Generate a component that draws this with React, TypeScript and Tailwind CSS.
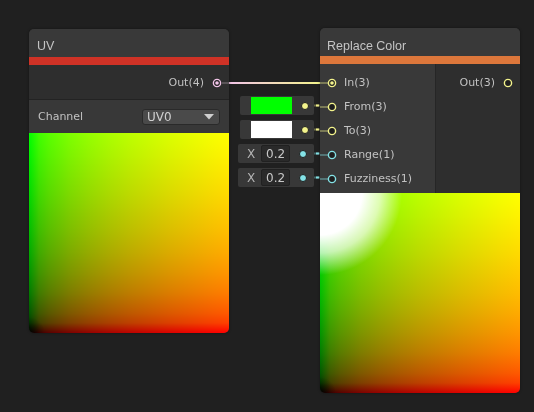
import React from "react";

const body = "font-['DejaVu_Sans',sans-serif] text-[11px] leading-[14px] text-[#c2c2c2]";

function Port({ color, filled }: { color: string; filled?: boolean }) {
  return (
    <svg width="10" height="10" viewBox="0 0 10 10" className="shrink-0">
      <circle cx="5" cy="5" r="3.6" fill="#1e1e1e" stroke={color} strokeWidth="1.4" />
      {filled && <circle cx="5" cy="5" r="1.8" fill={color} />}
    </svg>
  );
}

function UVPreview({ circle }: { circle?: boolean }) {
  return (
    <div className="relative h-[200px] w-[200px] overflow-hidden rounded-b-[5px] bg-[linear-gradient(to_right,rgb(0,0,0),rgb(63,0,0)_5%,rgb(89,0,0)_10%,rgb(124,0,0)_20%,rgb(149,0,0)_30%,rgb(170,0,0)_40%,rgb(188,0,0)_50%,rgb(203,0,0)_60%,rgb(218,0,0)_70%,rgb(231,0,0)_80%,rgb(244,0,0)_90%,rgb(255,0,0))]">
      <div className="absolute inset-0 bg-[linear-gradient(to_bottom,rgb(0,255,0),rgb(0,244,0)_10%,rgb(0,231,0)_20%,rgb(0,218,0)_30%,rgb(0,203,0)_40%,rgb(0,188,0)_50%,rgb(0,170,0)_60%,rgb(0,149,0)_70%,rgb(0,124,0)_80%,rgb(0,89,0)_90%,rgb(0,63,0)_95%,rgb(0,0,0))] mix-blend-screen" />
      {circle && (
        <div className="absolute inset-0 bg-[radial-gradient(circle_at_0_0,#fff_0px,#fff_42px,rgba(255,255,255,0.7)_60px,rgba(255,255,255,0)_82px)]" />
      )}
      <div className="absolute inset-0 bg-[radial-gradient(circle_at_0_100%,rgba(0,0,0,0.6)_0px,rgba(0,0,0,0)_16px)]" />
    </div>
  );
}

function InputRow({ label, color, filled }: { label: string; color: string; filled?: boolean }) {
  return (
    <div className="flex h-[24px] items-center">
      <div className="relative flex w-[24px] items-center justify-center">
        <div className="absolute left-0 top-1/2 h-[2px] w-[8px] -translate-y-1/2" style={{ background: color, opacity: 0.35 }} />
        <div className="relative">
          <Port color={color} filled={filled} />
        </div>
      </div>
      <span>{label}</span>
    </div>
  );
}

function ColorField({ swatch, dot }: { swatch: string; dot: string }) {
  return (
    <div className="flex h-[19px] w-[74px] items-center rounded-[2px] bg-[#383838] pl-[11px]">
      <div className="h-[17px] w-[41px]" style={{ background: swatch }} />
      <div className="ml-[9px] box-content h-[6px] w-[6px] rounded-full border border-[#1e1e1e]" style={{ background: dot }} />
    </div>
  );
}

function VecField({ dot }: { dot: string }) {
  return (
    <div className={`flex h-[19px] w-[76px] items-center rounded-[2px] bg-[#383838] pl-[9px] ${body}`}>
      <span className="w-[14px] text-[12px] text-[#b4b4b4]">X</span>
      <div className="flex h-[17px] w-[29px] items-center rounded-[2px] border border-[#212121] bg-[#2a2a2a] pl-[4px] text-[12px] text-[#c8c8c8]">
        0.2
      </div>
      <div className="ml-[9px] box-content h-[6px] w-[6px] rounded-full border border-[#1e1e1e]" style={{ background: dot }} />
    </div>
  );
}

export default function App() {
  const yellow = "#f3f38c";
  const cyan = "#84e2e6";
  const pink = "#f2c4e8";
  return (
    <div className={`relative h-[412px] w-[534px] overflow-hidden bg-[#202020] ${body}`}>
      {/* wires */}
      <svg className="absolute inset-0" width="534" height="412">
        <defs>
          <linearGradient id="w" x1="229" y1="0" x2="320" y2="0" gradientUnits="userSpaceOnUse">
            <stop offset="0" stopColor={pink} />
            <stop offset="1" stopColor={yellow} />
          </linearGradient>
        </defs>
        <rect x="229" y="82" width="91" height="2" fill="url(#w)" />
        {[
          { y: 105.5, c: yellow },
          { y: 129.5, c: yellow },
          { y: 153.5, c: cyan },
          { y: 177.5, c: cyan },
        ].map((w, i) => (
          <g key={i}>
            <rect x="314" y={w.y - 1} width="6" height="2" fill={w.c} opacity="0.35" />
            <rect x="316" y={w.y - 1} width="3" height="2" fill={w.c} />
          </g>
        ))}
      </svg>

      {/* UV node */}
      <div className="absolute left-[29px] top-[29px] w-[200px] rounded-[5px] bg-[#2e2e2e] shadow-[0_0_3px_rgba(0,0,0,0.4)]">
        <div className="h-[28px] rounded-t-[5px] bg-[#393939] pl-[8px] pt-[10px] font-['Liberation_Sans',sans-serif] text-[12.5px] leading-[15px] text-[#c4c4c4]">
          UV
        </div>
        <div className="h-[8px] bg-[#cf3226]" />
        <div className="flex h-[34px] items-center justify-end pt-[1px]">
          <span>Out(4)</span>
          <div className="ml-[8px] flex w-[17px] items-center">
            <Port color={pink} filled />
            <div className="h-[2px] w-[7px] bg-[#5a5458]" />
          </div>
        </div>
        <div className="h-px bg-[#232323]" />
        <div className="flex h-[33px] items-center justify-between bg-[#383838] pl-[9px] pr-[9px]">
          <span>Channel</span>
          <div className="flex h-[16px] w-[78px] items-center justify-between rounded-[3px] border border-[#2a2a2a] bg-[#4a4a4a] pl-[4px] pr-[5px] text-[12px] text-[#d0d0d0]">
            <span>UV0</span>
            <svg width="10" height="6" viewBox="0 0 10 6">
              <path d="M0 0 L10 0 L5 5.5 Z" fill="#cfcfcf" />
            </svg>
          </div>
        </div>
        <UVPreview />
      </div>

      {/* inline fields */}
      <div className="absolute left-[238px] top-[96px] flex flex-col items-end gap-[5px]">
        <ColorField swatch="#00ff00" dot={yellow} />
        <ColorField swatch="#ffffff" dot={yellow} />
        <VecField dot={cyan} />
        <VecField dot={cyan} />
      </div>

      {/* Replace Color node */}
      <div className="absolute left-[320px] top-[28px] w-[200px] rounded-[5px] bg-[#2e2e2e] shadow-[0_0_3px_rgba(0,0,0,0.4)]">
        <div className="h-[28px] rounded-t-[5px] bg-[#393939] pl-[7px] pt-[11px] font-['Liberation_Sans',sans-serif] text-[12.5px] leading-[15px] text-[#c4c4c4]">
          Replace Color
        </div>
        <div className="h-[8px] bg-[#dd773b]" />
        <div className="flex h-[129px]">
          <div className="w-[116px] border-r border-[#262626] bg-[#393939] pt-[7px]">
            <InputRow label="In(3)" color={yellow} filled />
            <InputRow label="From(3)" color={yellow} />
            <InputRow label="To(3)" color={yellow} />
            <InputRow label="Range(1)" color={cyan} />
            <InputRow label="Fuzziness(1)" color={cyan} />
          </div>
          <div className="flex flex-1 flex-col pt-[7px]">
            <div className="flex h-[24px] items-center justify-end pr-[7px]">
              <span>Out(3)</span>
              <div className="ml-[8px]">
                <Port color={yellow} />
              </div>
            </div>
          </div>
        </div>
        <UVPreview circle />
      </div>
    </div>
  );
}
